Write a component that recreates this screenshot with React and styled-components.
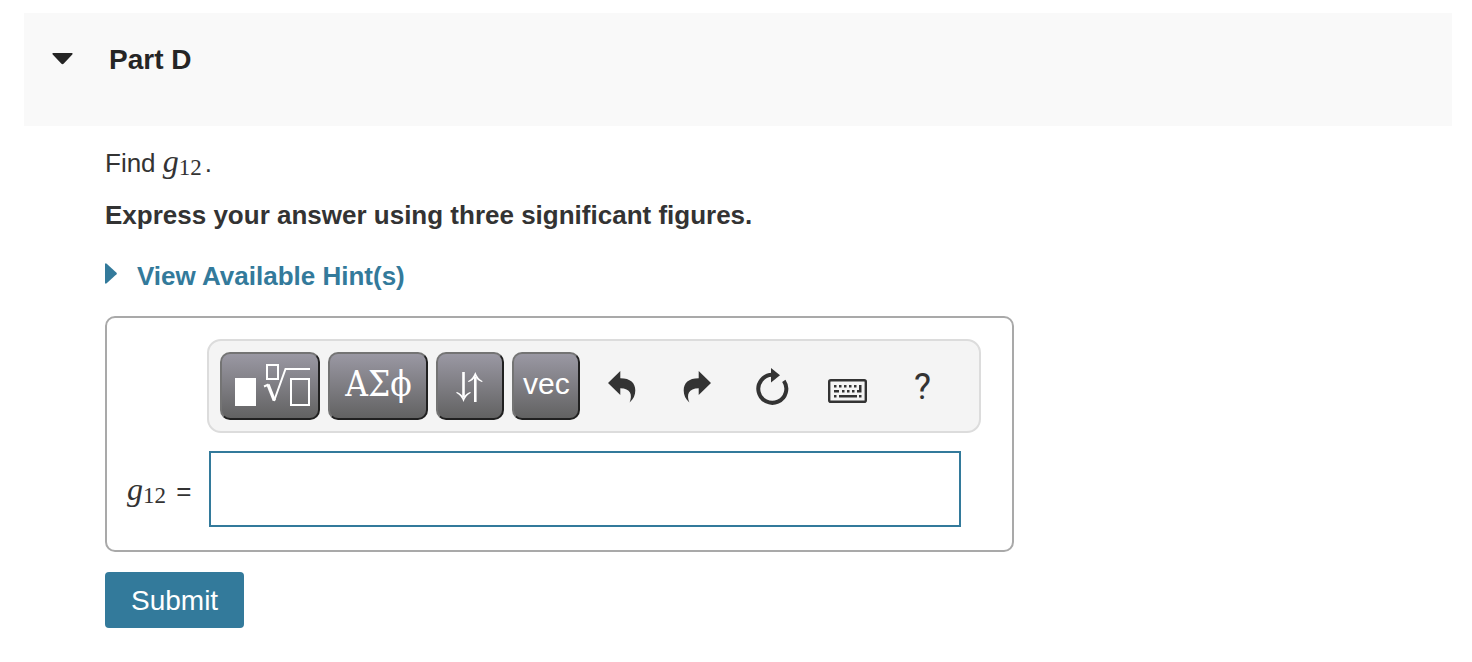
import React from "react";
import styled, { createGlobalStyle } from "styled-components";

const GlobalStyle = createGlobalStyle`
  *, *::before, *::after { box-sizing: border-box; }
  body {
    margin: 0;
    background: #fff;
    color: #333;
    font-family: "Liberation Sans", Arial, sans-serif;
    font-size: 26px;
    line-height: 32px;
  }
  button, input { font: inherit; color: inherit; }
`;

const Page = styled.div`
  padding: 13px 20px 34px 24px;
`;

const PartHeader = styled.header`
  background: #f9f9f9;
  padding: 31px 28px 50px;
`;

const PartTitle = styled.h2`
  margin: 0;
  font-size: 28px;
  line-height: 32px;
  color: #252525;
`;

const PartToggle = styled.button`
  display: flex;
  align-items: center;
  gap: 36px;
  padding: 0;
  border: 0;
  background: none;
  font-weight: bold;
  cursor: pointer;

  svg { margin-bottom: 2px; }
`;

const Content = styled.main`
  padding: 21px 0 0 81px;
`;

const Text = styled.p`
  margin: 0 0 20px;
  color: #333;
  font-weight: ${({ $strong }) => ($strong ? "bold" : "normal")};
`;

const HintButton = styled.button`
  display: flex;
  align-items: center;
  gap: 20px;
  margin-top: 29px;
  padding: 0;
  border: 0;
  background: none;
  color: #337a9b;
  font-weight: bold;
  cursor: pointer;

  svg { margin-bottom: 6px; }
`;

const AnswerForm = styled.form`
  margin: 0;
`;

const AnswerBox = styled.div`
  display: grid;
  grid-template-columns: auto minmax(0, 1fr);
  row-gap: 18px;
  column-gap: 16px;
  max-width: 909px;
  margin-top: 24px;
  padding: 21px 31px 23px 20px;
  border: 2px solid #a9a9a9;
  border-radius: 10px;
`;

const Toolbar = styled.div`
  grid-column: 2;
  display: flex;
  align-items: center;
  gap: 8px;
  padding: 11px;
  border: 2px solid #dcdcdc;
  border-radius: 14px;
  background: #f4f4f4;
`;

const PaletteButton = styled.button`
  display: flex;
  align-items: center;
  justify-content: center;
  width: ${({ $wide }) => ($wide ? "100px" : "68px")};
  height: 68px;
  padding: ${({ $icon }) => ($icon ? "0" : "0 0 4px")};
  border: 2px solid;
  border-color: #747474 #202020 #202020 #747474;
  border-radius: 10px;
  background: linear-gradient(#9a98a3, #626262);
  color: #fff;
  font-family: ${({ $serif }) =>
    $serif
      ? '"DejaVu Serif Condensed", "DejaVu Serif", serif'
      : '"Liberation Sans", sans-serif'};
  font-size: ${({ $serif }) => ($serif ? "35px" : "30px")};
  cursor: pointer;
`;

const ToolGroup = styled.div`
  display: flex;
  gap: 7px;
`;

const ToolButton = styled.button`
  display: flex;
  align-items: center;
  justify-content: center;
  width: 68px;
  height: 68px;
  padding: 2px 0 0;
  border: 0;
  background: none;
  font-family: Roboto, sans-serif;
  font-size: 36px;
  cursor: pointer;
`;

const AnswerLabel = styled.label`
  align-self: center;
  white-space: nowrap;
  padding-top: 4px;
`;

const AnswerInput = styled.input`
  height: 76px;
  min-width: 0;
  margin: 0 20px 0 2px;
  padding: 0 16px;
  border: 2px solid #337a9b;
  background: #fff;
  outline: none;
`;

const Variable = styled.span`
  margin-right: 3px;
  font-family: "Liberation Serif", serif;
  font-size: 32px;
  font-style: italic;
  font-weight: normal;
  line-height: 24px;
`;

const Subscript = styled.sub`
  font-size: 23px;
  font-style: normal;
  line-height: 0;
  vertical-align: -3px;
`;

const SubmitButton = styled.button`
  display: block;
  height: 56px;
  margin-top: 20px;
  padding: 2px 26px 0;
  border: 0;
  border-radius: 4px;
  background: #337a9b;
  color: #fff;
  font-size: 28px;
  cursor: pointer;
`;

function Quantity() {
  return (
    <Variable>
      g<Subscript>12</Subscript>
    </Variable>
  );
}

function CaretDown() {
  return (
    <svg width="21" height="12" viewBox="0 0 21 12" aria-hidden="true">
      <path d="M1.2 0H19.8Q21.2 .5 20.3 1.6L11.8 10.6Q10.5 12 9.2 10.6L.7 1.6Q-.2 .5 1.2 0Z" fill="#252525" />
    </svg>
  );
}

function CaretRight() {
  return (
    <svg width="12" height="21" viewBox="0 0 12 21" aria-hidden="true">
      <path d="M0 1Q.5 -.3 1.7 .8L11.5 9.8Q12.2 10.5 11.5 11.2L1.7 20.2Q.5 21.2 0 20Z" fill="#337a9b" />
    </svg>
  );
}

function TemplateIcon() {
  return (
    <svg width="80" height="46" viewBox="-4 0 80 46" aria-hidden="true">
      <path d="M1 15H22V43H1Z" fill="#fff" />
      <g fill="none" stroke="#fff">
        <path d="M33 2H44V16H33Z" strokeWidth="2" />
        <path d="M30 23.5L34.5 21.5" strokeWidth="2" />
        <path d="M34 21.5L40.3 37.5" strokeWidth="3.4" />
        <path d="M40 38L51.5 6H76" strokeWidth="2" />
        <path d="M57 16H75V42H57Z" strokeWidth="2" />
      </g>
    </svg>
  );
}

function ArrowsIcon() {
  return (
    <svg width="28" height="32" viewBox="0 -2 28 32" aria-hidden="true">
      <path d="M6.2 0H8.8V25H6.2ZM18 5H20.6V30H18Z" fill="#fff" />
      <path d="M0 20.8Q5 23 7.5 30Q10 23 15 20.8L14 20Q9.5 21.5 7.5 25.5Q5.5 21.5 1 20ZM11.8 9.2Q16.8 7 19.3 0Q21.8 7 26.8 9.2L25.8 10Q21.3 8.5 19.3 4.5Q17.3 8.5 12.8 10Z" fill="#fff" />
    </svg>
  );
}

function CurvedArrow({ flipped }) {
  return (
    <svg width="28" height="32" viewBox="0 0 28 32" aria-hidden="true">
      <path
        transform={flipped ? "translate(28 0) scale(-1 1)" : undefined}
        d="M0 12L12.3 0V7.2C22.5 7.2 27.3 12 27.3 19.5C27.3 24 25.5 28 21.6 31.6C24.8 23.8 22.5 17.3 12.3 17.3V24Z"
        fill="#333"
      />
    </svg>
  );
}

function ResetIcon() {
  return (
    <svg width="34" height="38" viewBox="0 0 34 38" aria-hidden="true">
      <path d="M17 6.8A14 14 0 1 0 28.8 12.8" fill="none" stroke="#333" strokeWidth="4" />
      <path d="M16 0L25 7.2L16 14.5Z" fill="#333" />
    </svg>
  );
}

function KeyboardIcon() {
  return (
    <svg width="39" height="32" viewBox="0 0 39 32" aria-hidden="true">
      <rect x="1.2" y="9.2" width="36.6" height="21.6" rx="1.6" fill="none" stroke="#333" strokeWidth="2.4" />
      <g fill="#333">
        <path d="M6 14h2.5v2.5H6zM11 14h2.5v2.5H11zM16 14h2.5v2.5H16zM21 14h2.5v2.5H21zM26 14h2.5v2.5H26z" />
        <path d="M31 14h2.5v7.5H29V19h2z" />
        <path d="M6 19h5v2.5H6zM14 19h2.5v2.5H14zM19 19h2.5v2.5H19zM24 19h2.5v2.5H24z" />
        <path d="M6 24h2.5v2.5H6zM11 24h18v2.5H11zM31 24h2.5v2.5H31z" />
      </g>
    </svg>
  );
}

export default function App() {
  return (
    <>
      <GlobalStyle />
      <Page>
        <PartHeader>
          <PartTitle>
            <PartToggle type="button" aria-expanded="true">
              <CaretDown />
              Part D
            </PartToggle>
          </PartTitle>
        </PartHeader>
        <Content>
          <Text>
            Find <Quantity />.
          </Text>
          <Text $strong>Express your answer using three significant figures.</Text>
          <HintButton type="button" aria-expanded="false">
            <CaretRight />
            View Available Hint(s)
          </HintButton>
          <AnswerForm onSubmit={(event) => event.preventDefault()}>
            <AnswerBox>
              <Toolbar role="toolbar" aria-label="Equation tools">
                <PaletteButton type="button" $wide $icon aria-label="Templates">
                  <TemplateIcon />
                </PaletteButton>
                <PaletteButton type="button" $wide $serif>
                  ΑΣϕ
                </PaletteButton>
                <PaletteButton type="button" $icon aria-label="Arrows">
                  <ArrowsIcon />
                </PaletteButton>
                <PaletteButton type="button">vec</PaletteButton>
                <ToolGroup>
                  <ToolButton type="button" aria-label="Undo">
                    <CurvedArrow />
                  </ToolButton>
                  <ToolButton type="button" aria-label="Redo">
                    <CurvedArrow flipped />
                  </ToolButton>
                  <ToolButton type="button" aria-label="Reset">
                    <ResetIcon />
                  </ToolButton>
                  <ToolButton type="button" aria-label="Keyboard shortcuts">
                    <KeyboardIcon />
                  </ToolButton>
                  <ToolButton type="button" aria-label="Help">?</ToolButton>
                </ToolGroup>
              </Toolbar>
              <AnswerLabel htmlFor="answer">
                <Quantity /> =
              </AnswerLabel>
              <AnswerInput id="answer" type="text" autoComplete="off" />
            </AnswerBox>
            <SubmitButton type="submit">Submit</SubmitButton>
          </AnswerForm>
        </Content>
      </Page>
    </>
  );
}
